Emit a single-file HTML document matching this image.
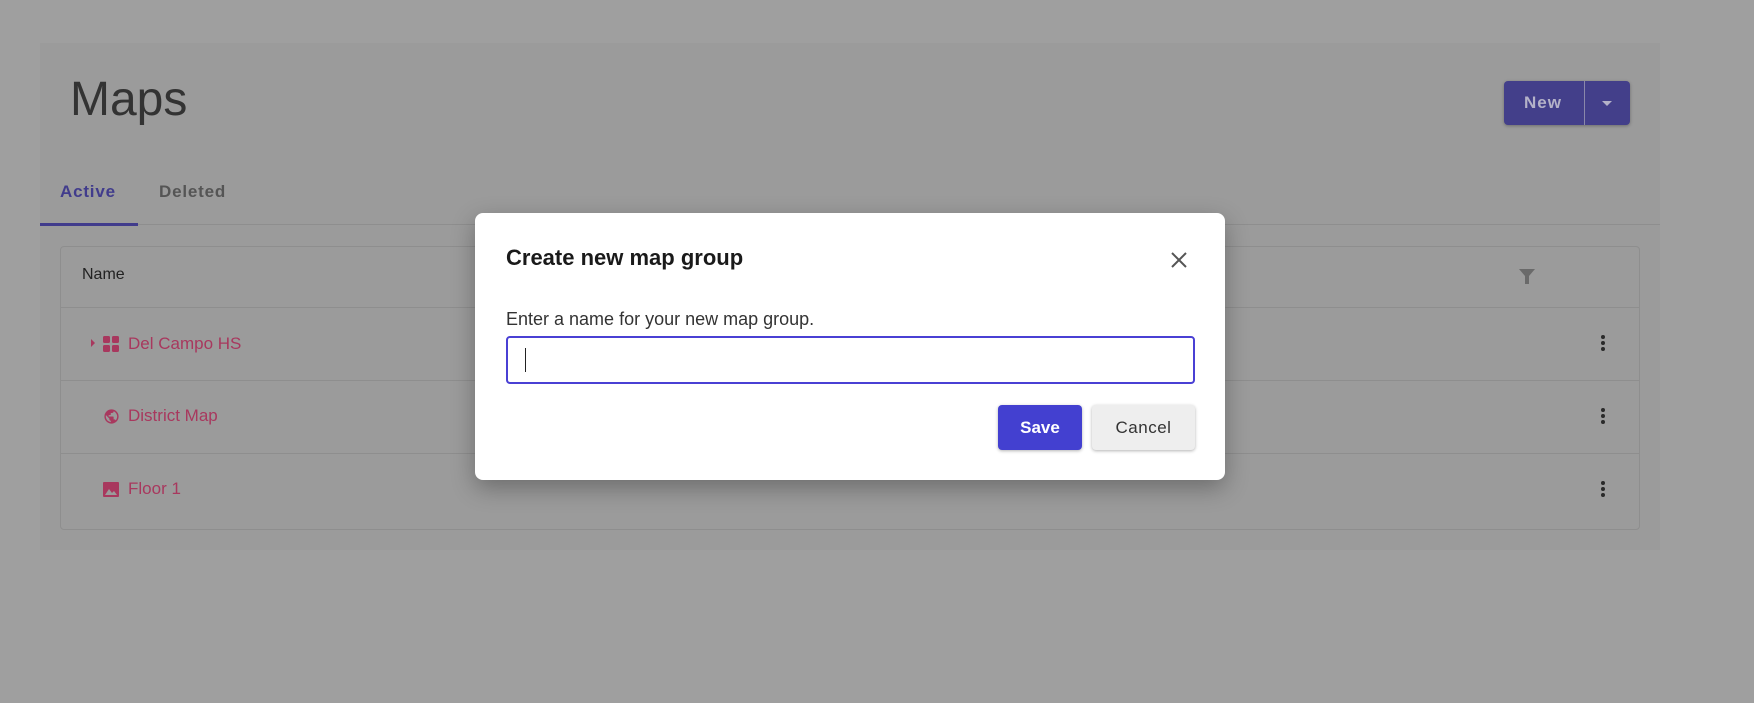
<!DOCTYPE html>
<html><head><style>
*{margin:0;padding:0;box-sizing:border-box}
body{width:1754px;height:703px;background:#9f9f9f;font-family:"Liberation Sans",sans-serif;position:relative;overflow:hidden}
.a{position:absolute}
.card{left:40px;top:43px;width:1620px;height:507px;background:#9b9b9b}
.t{left:70px;top:72px;font-size:48px;color:#333;}
.tab{top:182px;font-size:17px;font-weight:bold;letter-spacing:.8px}
.tbl{left:60px;top:246px;width:1580px;height:284px;border:1px solid #8e8e8e;border-radius:4px}
.hl{left:60px;width:1580px;height:1px;background:#8e8e8e}
.row{left:128px;font-size:17px;color:#a8385e}
.keb{left:1601px;width:4px}
.keb i{display:block;width:4px;height:4px;border-radius:2px;background:#2a2a2a;margin-bottom:2px}
.dlg{left:475px;top:213px;width:750px;height:267px;background:#fff;border-radius:8px;box-shadow:0 8px 24px rgba(0,0,0,.3)}
</style></head><body>
<div class="a card"></div>
<div class="a t">Maps</div>
<div class="a" style="left:1504px;top:81px;width:126px;height:44px;background:#433f8a;border-radius:4px;box-shadow:0 1px 3px rgba(0,0,0,.3)"></div>
<div class="a" style="left:1584px;top:81px;width:1px;height:44px;background:#8a88aa"></div>
<div class="a" style="left:1524px;top:93px;font-size:17px;font-weight:bold;color:#b4b2c8;letter-spacing:1px">New</div>
<div class="a" style="left:1602px;top:101px;width:0;height:0;border-left:5px solid transparent;border-right:5px solid transparent;border-top:5px solid #b4b2c8"></div>
<div class="a tab" style="left:60px;color:#413c8c">Active</div>
<div class="a tab" style="left:159px;color:#555">Deleted</div>
<div class="a" style="left:40px;top:224px;width:1620px;height:1px;background:#8e8e8e"></div>
<div class="a" style="left:40px;top:223px;width:98px;height:3px;background:#413c8c"></div>
<div class="a tbl"></div>
<div class="a hl" style="top:307px"></div>
<div class="a hl" style="top:380px"></div>
<div class="a hl" style="top:453px"></div>
<div class="a" style="left:82px;top:266px;font-size:16px;color:#222">Name</div>
<svg class="a" style="left:1518px;top:268px" width="18" height="18" viewBox="0 0 18 18"><path d="M1 1h16l-6 7v8h-4v-8z" fill="#6a6a6a"/></svg>
<div class="a" style="left:91px;top:339px;width:0;height:0;border-top:4px solid transparent;border-bottom:4px solid transparent;border-left:4px solid #a8385e"></div>
<svg class="a" style="left:103px;top:336px" width="16" height="16"><rect x="0" y="0" width="7" height="7" rx="1.5" fill="#a8385e"/><rect x="9" y="0" width="7" height="7" rx="1.5" fill="#a8385e"/><rect x="0" y="9" width="7" height="7" rx="1.5" fill="#a8385e"/><rect x="9" y="9" width="7" height="7" rx="1.5" fill="#a8385e"/></svg>
<div class="a row" style="top:334px">Del Campo HS</div>
<svg class="a" style="left:103px;top:408px" width="17" height="17" viewBox="0 0 24 24"><path d="M12 2a10 10 0 100 20 10 10 0 000-20zm-1 17.9A8 8 0 014.2 10l4.8 5v1c0 1.1.9 2 2 2zm6.9-2.5c-.3-.8-1-1.4-1.9-1.4h-1v-3c0-.6-.4-1-1-1H8v-2h2c.6 0 1-.4 1-1V7h2c1.1 0 2-.9 2-2v-.4a8 8 0 012.9 12.8z" fill="#a8385e"/></svg>
<div class="a row" style="top:406px">District Map</div>
<svg class="a" style="left:103px;top:482px" width="16" height="15" viewBox="0 0 16 15"><rect width="16" height="15" rx="1" fill="#a8385e"/><path d="M2 13l4-6 3 4 2-2 3 4z" fill="#9b9b9b"/></svg>
<div class="a row" style="top:479px">Floor 1</div>
<div class="a keb" style="top:335px"><i></i><i></i><i></i></div>
<div class="a keb" style="top:408px"><i></i><i></i><i></i></div>
<div class="a keb" style="top:481px"><i></i><i></i><i></i></div>
<div class="a dlg"></div>
<div class="a" style="left:506px;top:245px;font-size:22px;font-weight:bold;color:#1a1a1a">Create new map group</div>
<svg class="a" style="left:1170px;top:251px" width="18" height="18"><path d="M2 2L16 16M16 2L2 16" stroke="#555" stroke-width="2"/></svg>
<div class="a" style="left:506px;top:309px;font-size:18px;color:#333">Enter a name for your new map group.</div>
<div class="a" style="left:506px;top:336px;width:689px;height:48px;border:2px solid #4a40d4;border-radius:4px"></div>
<div class="a" style="left:525px;top:348px;width:1px;height:24px;background:#222"></div>
<div class="a" style="left:998px;top:405px;width:84px;height:45px;background:#4340d0;border-radius:4px;box-shadow:0 1px 3px rgba(0,0,0,.3);color:#fff;font-weight:bold;font-size:17px;text-align:center;line-height:45px">Save</div>
<div class="a" style="left:1092px;top:405px;width:103px;height:45px;background:#eeeeee;border-radius:4px;box-shadow:0 1px 3px rgba(0,0,0,.3);color:#333;font-size:17px;text-align:center;line-height:45px;letter-spacing:.5px">Cancel</div>
</body></html>
